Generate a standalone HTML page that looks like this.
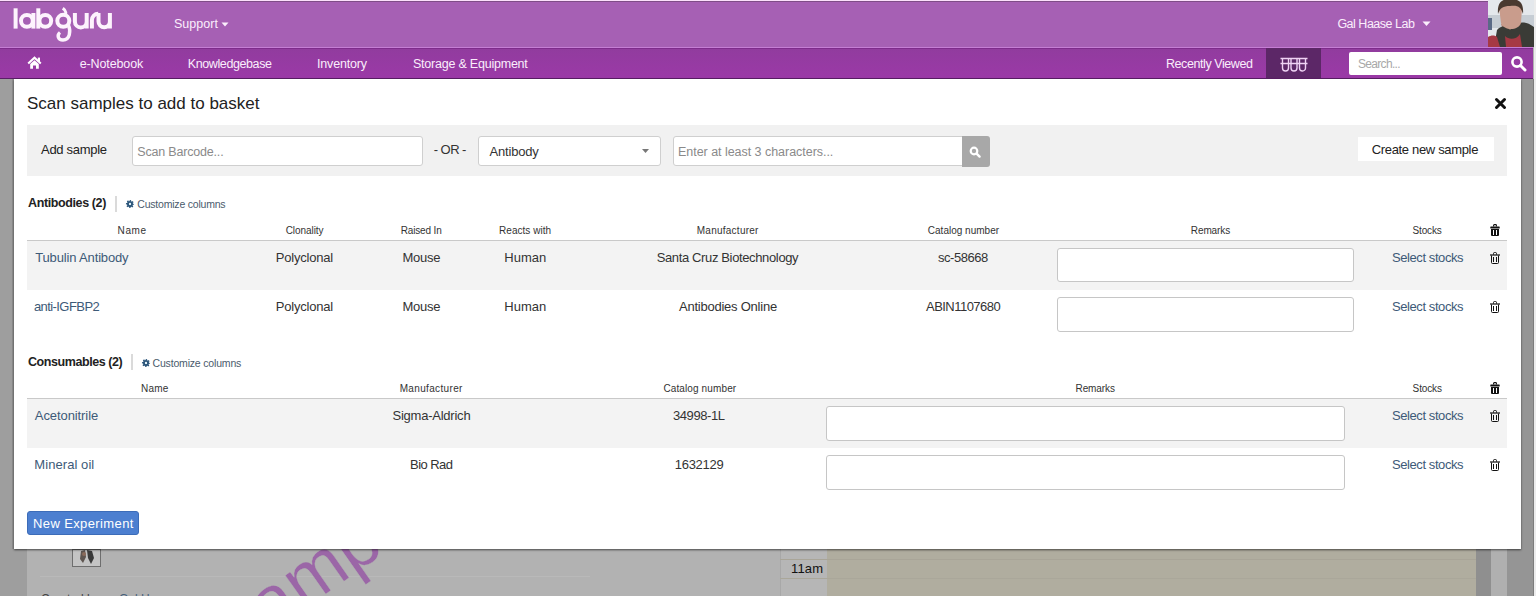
<!DOCTYPE html>
<html><head><meta charset="utf-8"><style>
*{margin:0;padding:0;box-sizing:border-box}
html,body{width:1536px;height:596px;overflow:hidden;background:#b2b2b2;font-family:"Liberation Sans",sans-serif;color:#333}
.a{position:absolute;white-space:nowrap}
.t{position:absolute;white-space:nowrap;line-height:1}
svg{position:absolute;overflow:visible}
</style></head><body>
<div class="a" style="left:0px;top:79px;width:27px;height:517px;background:#9e9e9e"></div>
<div class="a" style="left:12px;top:79px;width:2px;height:470px;background:#8e8e8e"></div>
<div class="a" style="left:780px;top:549px;width:47px;height:47px;background:#b6b6b6;border-left:1px solid #a8a8a8"></div>
<div class="a" style="left:827px;top:549px;width:649px;height:47px;background:#b0ad9f"></div>
<div class="a" style="left:780px;top:559px;width:696px;height:1px;background:#a9a598"></div>
<div class="a" style="left:780px;top:578px;width:696px;height:1px;background:#aaa79a"></div>
<div class="a" style="left:1476px;top:549px;width:15px;height:47px;background:#8f8f8f"></div>
<div class="a" style="left:1491px;top:549px;width:16px;height:47px;background:#b0b0b0"></div>
<div class="a" style="left:1507px;top:79px;width:27px;height:517px;background:#959595"></div>
<div class="a" style="left:1534px;top:0px;width:2px;height:596px;background:#ececec"></div>
<div class="a" style="left:1533px;top:79px;width:1px;height:517px;background:#7c7c7c"></div>
<div class="a" style="left:72px;top:549px;width:29px;height:18px;background:#c4c4c4;border:1px solid #6e6e6e"></div>
<svg width="29" height="18" style="left:72px;top:549px"><path d="M9,2 L13,1 L14,8 L11,14 L8,10Z" fill="#5e5550"/><path d="M15,1 L20,2 L22,9 L19,15 L16,9Z" fill="#3a3a3a"/><circle cx="12" cy="5" r="2" fill="#8a6a5a"/></svg>
<div class="t" style="left:41px;top:593px;font-size:12px;color:#444">Created by</div>
<div class="t" style="left:119px;top:593px;font-size:12px;color:#46607a">Gal Haase</div>
<div class="a" style="left:40px;top:576px;width:550px;height:1px;background:#b9b9b9"></div>
<svg width="1536" height="596" style="left:0;top:0"><text x="0" y="0" transform="translate(240,654) rotate(-35)" font-family="Liberation Sans" font-size="73" fill="#9b66a7" stroke="#b2b2b2" stroke-width="0.4">sample</text></svg>
<div class="a" style="left:0px;top:0px;width:1533px;height:48px;background:#a660b4"></div>
<div class="a" style="left:0px;top:0px;width:1533px;height:1px;background:#fbe0fb"></div>
<div class="a" style="left:0px;top:1px;width:1533px;height:1px;background:#7f4d87"></div>
<div class="a" style="left:0px;top:47px;width:1533px;height:32px;background:linear-gradient(#913c9e,#9b39a7);border-top:1px solid #c57dd4;border-bottom:1px solid #5a1f66"></div>
<div class="a" style="left:0px;top:48px;width:1533px;height:1px;background:#7e2b8b"></div>
<svg width="120" height="48" style="left:0;top:0" fill="none" stroke="#fdf3fd" stroke-width="4">
  <path d="M15.6,8.3V28.6"/>
  <circle cx="26.9" cy="20.8" r="5.9"/><path d="M33.4,13V28.6"/>
  <path d="M38.3,8.3V28.6"/><circle cx="45.3" cy="20.8" r="5.9"/>
  <circle cx="63.3" cy="20.8" r="6"/>
  <path d="M68.4,25 C71,31 70,40 63,40 C57.8,40 56.8,35 60,32.5" stroke-width="3.4"/>
  <path d="M62.8,8.3 C66.5,11 66.8,14 63.5,15.2" stroke-width="3"/>
  <path d="M74.9,13V21.5A5.9,5.9 0 0 0 86.7,21.5V13M86.7,13V28.6"/>
  <path d="M91.9,28.6V20A6.3,6.3 0 0 1 98.2,13.7"/>
  <path d="M98.5,13V21.5A5.7,5.7 0 0 0 109.9,21.5V13M109.9,13V28.6"/>
</svg>
<svg width="9" height="6" style="left:221px;top:22px"><path d="M0.5,0.5H7.5L4,4.5Z" fill="#fbeefc"/></svg>
<svg width="10" height="6" style="left:1422px;top:21px"><path d="M0.5,0.5H8.5L4.5,5Z" fill="#fbeefc"/></svg>
<svg width="46" height="47" style="left:1488px;top:0">
  <rect width="46" height="47" fill="#e4e8ec"/>
  <rect y="15" width="46" height="13" fill="#c6cdd4"/>
  <rect x="0" y="18" width="4" height="12" fill="#5a6a86"/>
  <path d="M13,24 L17,36 H31 L33,24Z" fill="#b98a7a"/>
  <path d="M6,47 L9,30 C14,24 20,26 22,30 C26,24 34,18 46,27 V47Z" fill="#3a3b36"/>
  <path d="M0,47 V37 C3,35 7,35 9,37 L12,47Z" fill="#a63944"/>
  <path d="M18,47 L17,36 C21,40 28,40 32,34 L34,47Z" fill="#a63944"/>
  <path d="M11,7 C11,-2 34,-2 34,8 L33,23 C30,31 16,31 13,23Z" fill="#c99c8c"/>
  <path d="M10,14 C9,2 14,-1 22,-1 C31,-1 36,2 35,14 C33,7 30,5 22,6 C15,6 12,8 10,14Z" fill="#4a3a30"/>
</svg>
<svg width="16" height="14" style="left:27px;top:56px">
  <path d="M1.2,7.6 L7.5,1.8 L13.8,7.6" fill="none" stroke="#fff" stroke-width="2.1"/>
  <rect x="10.8" y="1.6" width="2.2" height="4.2" fill="#fff"/>
  <path d="M3.2,8 L7.5,4.3 L11.8,8 V12.8 H9 V9.6 H6 V12.8 H3.2Z" fill="#fff"/>
</svg>
<div class="a" style="left:1266px;top:48px;width:55px;height:30px;background:#5c2767"></div>
<svg width="30" height="16" style="left:1279px;top:57px" fill="none" stroke="#efd2f4" stroke-width="1.4">
  <path d="M1.5,1.5H28.5M1.5,6.5H28.5"/>
  <path d="M3.5,1.5V11A3,3 0 0 0 9.5,11V1.5"/>
  <path d="M12,1.5V11A3,3 0 0 0 18,11V1.5"/>
  <path d="M20.5,1.5V11A3,3 0 0 0 26.5,11V1.5"/>
</svg>
<div class="a" style="left:1349px;top:52px;width:153px;height:23px;background:#fff;border-radius:2px"></div>
<svg width="18" height="18" style="left:1510px;top:55px" fill="none" stroke="#fff">
  <circle cx="7" cy="7" r="4.6" stroke-width="2.6"/>
  <path d="M10.5,10.5L15,15" stroke-width="3" stroke-linecap="round"/>
</svg>
<div class="a" style="left:14px;top:79px;width:1507px;height:470px;background:#fff;box-shadow:0 1px 2px rgba(0,0,0,.6)"></div>
<svg width="12" height="12" style="left:1495px;top:98px" stroke="#111" stroke-width="3" stroke-linecap="round"><path d="M1.5,1.5L9.5,9.5M9.5,1.5L1.5,9.5"/></svg>
<div class="a" style="left:27px;top:125px;width:1480px;height:51px;background:#f1f1f1"></div>
<div class="a" style="left:132px;top:136px;width:291px;height:30px;background:#fff;border:1px solid #cfcfcf;border-radius:3px"></div>
<div class="a" style="left:478px;top:136px;width:183px;height:30px;background:#fff;border:1px solid #cfcfcf;border-radius:3px"></div>
<svg width="8" height="5" style="left:642px;top:149px"><path d="M0,0H7L3.5,4Z" fill="#777"/></svg>
<div class="a" style="left:673px;top:136px;width:290px;height:30px;background:#fff;border:1px solid #cfcfcf;border-radius:3px 0 0 3px"></div>
<div class="a" style="left:962px;top:136px;width:28px;height:31px;background:#a8a8a8;border-radius:0 3px 3px 0"></div>
<svg width="14" height="14" style="left:969px;top:146px" fill="none" stroke="#fff"><circle cx="5" cy="5" r="3.3" stroke-width="2.2"/><path d="M7.6,7.6L10.6,10.6" stroke-width="2.4" stroke-linecap="round"/></svg>
<div class="a" style="left:1358px;top:137px;width:136px;height:24px;background:#fff"></div>
<div class="a" style="left:115px;top:196px;width:1.5px;height:16px;background:#dadada"></div>
<svg width="8" height="8" style="left:126px;top:200px" fill="none" stroke="#2b557a"><circle cx="4" cy="4" r="3.3" stroke-width="1.5" stroke-dasharray="1.35 1.24" stroke-dashoffset="0.67"/><circle cx="4" cy="4" r="2.1" stroke-width="1.9"/><circle cx="4" cy="4" r="1.05" fill="#d9eef8" stroke="none"/></svg>
<svg width="11" height="13" style="left:1490px;top:224px"><path d="M3.6,2.6V1.3Q3.6,0.6 4.3,0.6H5.7Q6.4,0.6 6.4,1.3V2.6" fill="none" stroke="#111" stroke-width="1.1"/><rect x="0.3" y="2.4" width="9.4" height="2" rx="0.5" fill="#111"/><path d="M1,5H9V11Q9,12 8,12H2Q1,12 1,11Z" fill="#111"/><rect x="3" y="6" width="1" height="5" fill="#fff"/><rect x="6" y="6" width="1" height="5" fill="#fff"/></svg>
<div class="a" style="left:27px;top:240px;width:1480px;height:1px;background:#c9c9c9"></div>
<div class="a" style="left:27px;top:241px;width:1480px;height:49px;background:#f3f3f3"></div>
<div class="a" style="left:1057px;top:248px;width:297px;height:34px;background:#fff;border:1px solid #c6c6c6;border-radius:3px"></div>
<svg width="11" height="13" style="left:1490px;top:252px" fill="none" stroke="#111"><path d="M3.5,2.6V1.5Q3.5,0.5 4.5,0.5H5.5Q6.5,0.5 6.5,1.5V2.6" stroke-width="1"/><path d="M0,3H10" stroke-width="1.2"/><path d="M1.5,3.5V10.5Q1.5,11.5 2.5,11.5H7.5Q8.5,11.5 8.5,10.5V3.5" stroke-width="1"/><path d="M3.5,5V10M6.5,5V10" stroke-width="1"/></svg>
<div class="a" style="left:1057px;top:297px;width:297px;height:35px;background:#fff;border:1px solid #c6c6c6;border-radius:3px"></div>
<svg width="11" height="13" style="left:1490px;top:301px" fill="none" stroke="#111"><path d="M3.5,2.6V1.5Q3.5,0.5 4.5,0.5H5.5Q6.5,0.5 6.5,1.5V2.6" stroke-width="1"/><path d="M0,3H10" stroke-width="1.2"/><path d="M1.5,3.5V10.5Q1.5,11.5 2.5,11.5H7.5Q8.5,11.5 8.5,10.5V3.5" stroke-width="1"/><path d="M3.5,5V10M6.5,5V10" stroke-width="1"/></svg>
<div class="a" style="left:131px;top:354px;width:1.5px;height:16px;background:#dadada"></div>
<svg width="8" height="8" style="left:142px;top:359px" fill="none" stroke="#2b557a"><circle cx="4" cy="4" r="3.3" stroke-width="1.5" stroke-dasharray="1.35 1.24" stroke-dashoffset="0.67"/><circle cx="4" cy="4" r="2.1" stroke-width="1.9"/><circle cx="4" cy="4" r="1.05" fill="#d9eef8" stroke="none"/></svg>
<svg width="11" height="13" style="left:1490px;top:382px"><path d="M3.6,2.6V1.3Q3.6,0.6 4.3,0.6H5.7Q6.4,0.6 6.4,1.3V2.6" fill="none" stroke="#111" stroke-width="1.1"/><rect x="0.3" y="2.4" width="9.4" height="2" rx="0.5" fill="#111"/><path d="M1,5H9V11Q9,12 8,12H2Q1,12 1,11Z" fill="#111"/><rect x="3" y="6" width="1" height="5" fill="#fff"/><rect x="6" y="6" width="1" height="5" fill="#fff"/></svg>
<div class="a" style="left:27px;top:398px;width:1480px;height:1px;background:#c9c9c9"></div>
<div class="a" style="left:27px;top:399px;width:1480px;height:49px;background:#f3f3f3"></div>
<div class="a" style="left:826px;top:406px;width:519px;height:35px;background:#fff;border:1px solid #c6c6c6;border-radius:3px"></div>
<svg width="11" height="13" style="left:1490px;top:410px" fill="none" stroke="#111"><path d="M3.5,2.6V1.5Q3.5,0.5 4.5,0.5H5.5Q6.5,0.5 6.5,1.5V2.6" stroke-width="1"/><path d="M0,3H10" stroke-width="1.2"/><path d="M1.5,3.5V10.5Q1.5,11.5 2.5,11.5H7.5Q8.5,11.5 8.5,10.5V3.5" stroke-width="1"/><path d="M3.5,5V10M6.5,5V10" stroke-width="1"/></svg>
<div class="a" style="left:826px;top:455px;width:519px;height:35px;background:#fff;border:1px solid #c6c6c6;border-radius:3px"></div>
<svg width="11" height="13" style="left:1490px;top:459px" fill="none" stroke="#111"><path d="M3.5,2.6V1.5Q3.5,0.5 4.5,0.5H5.5Q6.5,0.5 6.5,1.5V2.6" stroke-width="1"/><path d="M0,3H10" stroke-width="1.2"/><path d="M1.5,3.5V10.5Q1.5,11.5 2.5,11.5H7.5Q8.5,11.5 8.5,10.5V3.5" stroke-width="1"/><path d="M3.5,5V10M6.5,5V10" stroke-width="1"/></svg>
<div class="a" style="left:27px;top:511px;width:112px;height:24px;background:#4c7fd0;border:1px solid #3c6cb8;border-radius:3px"></div>
<div class="t" style="left:174.0px;top:17.9px;font-size:12.5px;color:#fbeefc;font-weight:400;letter-spacing:0.033px">Support</div>
<div class="t" style="left:1337.4px;top:17.8px;font-size:12.5px;color:#fbeefc;font-weight:400;letter-spacing:-0.492px">Gal Haase Lab</div>
<div class="t" style="left:79.7px;top:58.1px;font-size:12.5px;color:#fbeefc;font-weight:400;letter-spacing:-0.122px">e-Notebook</div>
<div class="t" style="left:187.8px;top:58.1px;font-size:12.5px;color:#fbeefc;font-weight:400;letter-spacing:-0.400px">Knowledgebase</div>
<div class="t" style="left:317.0px;top:58.1px;font-size:12.5px;color:#fbeefc;font-weight:400;letter-spacing:-0.163px">Inventory</div>
<div class="t" style="left:413.0px;top:58.1px;font-size:12.5px;color:#fbeefc;font-weight:400;letter-spacing:-0.222px">Storage &amp; Equipment</div>
<div class="t" style="left:1166.0px;top:58.0px;font-size:12.5px;color:#fbeefc;font-weight:400;letter-spacing:-0.429px">Recently Viewed</div>
<div class="t" style="left:1358.0px;top:57.8px;font-size:12px;color:#a8a8a8;font-weight:400;letter-spacing:-0.688px">Search...</div>
<div class="t" style="left:27.0px;top:94.6px;font-size:17px;color:#222;font-weight:400;letter-spacing:0.000px">Scan samples to add to basket</div>
<div class="t" style="left:41.0px;top:143.2px;font-size:13px;color:#222;font-weight:400;letter-spacing:-0.289px">Add sample</div>
<div class="t" style="left:137.3px;top:146.0px;font-size:12.5px;color:#8a8a8a;font-weight:400;letter-spacing:-0.186px">Scan Barcode...</div>
<div class="t" style="left:433.8px;top:143.3px;font-size:13px;color:#333;font-weight:400;letter-spacing:-0.560px">- OR -</div>
<div class="t" style="left:489.6px;top:144.7px;font-size:13px;color:#333;font-weight:400;letter-spacing:-0.200px">Antibody</div>
<div class="t" style="left:678.0px;top:145.9px;font-size:12.5px;color:#8a8a8a;font-weight:400;letter-spacing:-0.034px">Enter at least 3 characters...</div>
<div class="t" style="left:1371.7px;top:143.4px;font-size:13px;color:#222;font-weight:400;letter-spacing:-0.331px">Create new sample</div>
<div class="t" style="left:28.0px;top:197.4px;font-size:12.5px;color:#222;font-weight:700;letter-spacing:-0.385px">Antibodies (2)</div>
<div class="t" style="left:137.3px;top:199.1px;font-size:10.5px;color:#4a5b6c;font-weight:400;letter-spacing:-0.206px">Customize columns</div>
<div class="t" style="left:117.5px;top:226.0px;font-size:10px;color:#333;font-weight:400;letter-spacing:0.667px">Name</div>
<div class="t" style="left:285.7px;top:226.0px;font-size:10px;color:#333;font-weight:400;letter-spacing:-0.062px">Clonality</div>
<div class="t" style="left:400.7px;top:226.0px;font-size:10px;color:#333;font-weight:400;letter-spacing:-0.150px">Raised In</div>
<div class="t" style="left:499.0px;top:226.0px;font-size:10px;color:#333;font-weight:400;letter-spacing:0.050px">Reacts with</div>
<div class="t" style="left:696.8px;top:226.0px;font-size:10px;color:#333;font-weight:400;letter-spacing:0.245px">Manufacturer</div>
<div class="t" style="left:927.8px;top:226.0px;font-size:10px;color:#333;font-weight:400;letter-spacing:0.008px">Catalog number</div>
<div class="t" style="left:1190.8px;top:226.0px;font-size:10px;color:#333;font-weight:400;letter-spacing:-0.100px">Remarks</div>
<div class="t" style="left:1412.5px;top:226.0px;font-size:10px;color:#333;font-weight:400;letter-spacing:-0.140px">Stocks</div>
<div class="t" style="left:35.2px;top:251.2px;font-size:13px;color:#3d5a78;font-weight:400;letter-spacing:-0.147px">Tubulin Antibody</div>
<div class="t" style="left:275.8px;top:251.2px;font-size:13px;color:#333;font-weight:400;letter-spacing:-0.211px">Polyclonal</div>
<div class="t" style="left:402.6px;top:251.2px;font-size:13px;color:#333;font-weight:400;letter-spacing:-0.300px">Mouse</div>
<div class="t" style="left:504.3px;top:251.2px;font-size:13px;color:#333;font-weight:400;letter-spacing:0.025px">Human</div>
<div class="t" style="left:656.7px;top:251.2px;font-size:13px;color:#333;font-weight:400;letter-spacing:-0.365px">Santa Cruz Biotechnology</div>
<div class="t" style="left:938.0px;top:251.2px;font-size:13px;color:#333;font-weight:400;letter-spacing:-0.471px">sc-58668</div>
<div class="t" style="left:1392.0px;top:251.2px;font-size:13px;color:#3d5a78;font-weight:400;letter-spacing:-0.417px">Select stocks</div>
<div class="t" style="left:33.9px;top:300.0px;font-size:13px;color:#3d5a78;font-weight:400;letter-spacing:-0.570px">anti-IGFBP2</div>
<div class="t" style="left:275.8px;top:300.0px;font-size:13px;color:#333;font-weight:400;letter-spacing:-0.211px">Polyclonal</div>
<div class="t" style="left:402.6px;top:300.0px;font-size:13px;color:#333;font-weight:400;letter-spacing:-0.300px">Mouse</div>
<div class="t" style="left:504.3px;top:300.0px;font-size:13px;color:#333;font-weight:400;letter-spacing:0.025px">Human</div>
<div class="t" style="left:679.0px;top:300.0px;font-size:13px;color:#333;font-weight:400;letter-spacing:-0.237px">Antibodies Online</div>
<div class="t" style="left:926.0px;top:300.0px;font-size:13px;color:#333;font-weight:400;letter-spacing:-0.530px">ABIN1107680</div>
<div class="t" style="left:1392.0px;top:300.0px;font-size:13px;color:#3d5a78;font-weight:400;letter-spacing:-0.417px">Select stocks</div>
<div class="t" style="left:28.0px;top:356.2px;font-size:12.5px;color:#222;font-weight:700;letter-spacing:-0.429px">Consumables (2)</div>
<div class="t" style="left:152.5px;top:357.9px;font-size:10.5px;color:#4a5b6c;font-weight:400;letter-spacing:-0.175px">Customize columns</div>
<div class="t" style="left:141.0px;top:383.5px;font-size:10px;color:#333;font-weight:400;letter-spacing:0.200px">Name</div>
<div class="t" style="left:399.7px;top:383.5px;font-size:10px;color:#333;font-weight:400;letter-spacing:0.345px">Manufacturer</div>
<div class="t" style="left:663.4px;top:383.5px;font-size:10px;color:#333;font-weight:400;letter-spacing:0.123px">Catalog number</div>
<div class="t" style="left:1075.5px;top:383.5px;font-size:10px;color:#333;font-weight:400;letter-spacing:-0.083px">Remarks</div>
<div class="t" style="left:1412.6px;top:383.5px;font-size:10px;color:#333;font-weight:400;letter-spacing:-0.120px">Stocks</div>
<div class="t" style="left:34.8px;top:408.6px;font-size:13px;color:#3d5a78;font-weight:400;letter-spacing:-0.082px">Acetonitrile</div>
<div class="t" style="left:392.5px;top:408.6px;font-size:13px;color:#333;font-weight:400;letter-spacing:-0.233px">Sigma-Aldrich</div>
<div class="t" style="left:673.0px;top:408.6px;font-size:13px;color:#333;font-weight:400;letter-spacing:-0.429px">34998-1L</div>
<div class="t" style="left:1392.0px;top:408.6px;font-size:13px;color:#3d5a78;font-weight:400;letter-spacing:-0.417px">Select stocks</div>
<div class="t" style="left:34.3px;top:458.4px;font-size:13px;color:#3d5a78;font-weight:400;letter-spacing:0.070px">Mineral oil</div>
<div class="t" style="left:410.0px;top:458.4px;font-size:13px;color:#333;font-weight:400;letter-spacing:-0.533px">Bio Rad</div>
<div class="t" style="left:674.8px;top:458.4px;font-size:13px;color:#333;font-weight:400;letter-spacing:-0.300px">1632129</div>
<div class="t" style="left:1392.0px;top:458.4px;font-size:13px;color:#3d5a78;font-weight:400;letter-spacing:-0.417px">Select stocks</div>
<div class="t" style="left:33.0px;top:517.0px;font-size:13px;color:#fff;font-weight:400;letter-spacing:0.385px">New Experiment</div>
<div class="t" style="left:791.0px;top:562.0px;font-size:13px;color:#111;font-weight:400;letter-spacing:0.167px">11am</div>
</body></html>
